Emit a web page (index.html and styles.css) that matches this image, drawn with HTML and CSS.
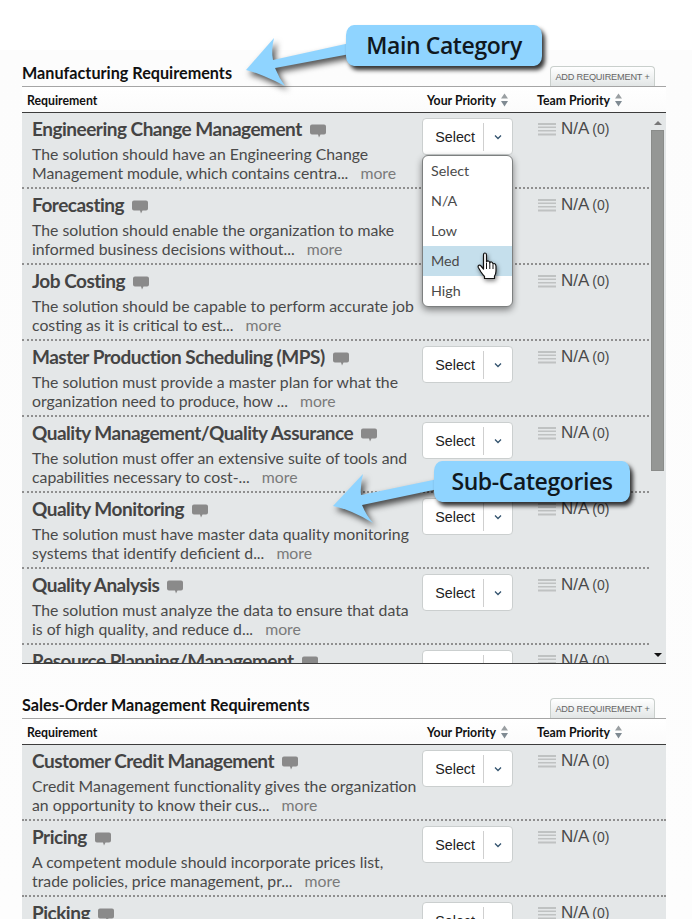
FILE: index.html
```html
<!DOCTYPE html>
<html lang="en">
<head>
<meta charset="utf-8">
<title>Requirements</title>
<link rel="stylesheet" href="styles.css">
</head>
<body>
<svg width="0" height="0" class="defs">
  <defs>
    <symbol id="bubble" viewBox="0 0 16 14"><path d="M2 0.5H14Q16 0.5 16 2.5V8.5Q16 10.500 14 10.500H10.500L9 13.500L8 10.500H2Q0 10.500 0 8.500V2.500Q0 0.500 2 0.500Z"/></symbol>
    <symbol id="sort" viewBox="0 0 7 14"><path d="M3.500 0.500L7 5.500H0Z" fill="#9a9fa2"/><path d="M0 8H7L3.500 13.500Z" fill="#7f8a92"/></symbol>
    <symbol id="bars" viewBox="0 0 18 13"><path d="M0 0H18V2H0ZM0 3.500H18V5H0ZM0 7H18V8.500H0ZM0 10.500H18V12.500H0Z"/></symbol>
    <symbol id="chev" viewBox="0 0 8 6"><path d="M1 1.500L4 4.500L7 1.500" fill="none" stroke="#33536e" stroke-width="1.300"/></symbol>
  </defs>
</svg>
<main class="page">
  <section class="block">
    <header class="titlebar">
      <h2>Manufacturing Requirements</h2>
      <button class="add">ADD REQUIREMENT +</button>
    </header>
    <div class="heads">
      <span class="h-req">Requirement</span>
      <span class="h-you">Your Priority <svg class="sort"><use href="#sort"/></svg></span>
      <span class="h-team">Team Priority <svg class="sort"><use href="#sort"/></svg></span>
    </div>
    <div class="listwrap scrolled">
      <div class="rows">
        <article class="row">
          <div class="desc"><h3>Engineering Change Management <svg class="bubble"><use href="#bubble"/></svg></h3><p>The solution should have an Engineering Change<br>Management module, which contains centra... <a>more</a></p></div>
          <div class="pick">
            <div class="select"><span class="sel-text">Select</span><span class="sel-arrow"><svg class="chev"><use href="#chev"/></svg></span></div>
            <ul class="menu">
              <li>Select</li><li>N/A</li><li>Low</li>
              <li class="hover">Med
                <svg class="hand" viewBox="0 0 20 28"><path d="M6.500 3Q6.500 1 8 1T9.500 3V10Q10 8.800 11.300 9T12.800 10.800Q13.300 9.800 14.500 10T16 12Q16.800 11.200 17.800 11.700T19 14V19Q19 22 17.500 24V26.500H7.500V24.500Q6 23 4 20L1.300 15.500Q0.700 14 1.800 13.300T4 14L6.500 17Z" fill="#fff" stroke="#111" stroke-width="1.200" stroke-linejoin="round"/><path d="M9.500 11V17M12.800 11V17M16 12.500V17" stroke="#111" fill="none"/></svg>
              </li>
              <li>High</li>
            </ul>
          </div>
          <div class="team"><svg class="bars"><use href="#bars"/></svg><span class="na">N/A</span> <span class="cnt">(0)</span></div>
        </article>
        <article class="row">
          <div class="desc"><h3>Forecasting <svg class="bubble"><use href="#bubble"/></svg></h3><p>The solution should enable the organization to make<br>informed business decisions without... <a>more</a></p></div>
          <div class="pick"></div>
          <div class="team"><svg class="bars"><use href="#bars"/></svg><span class="na">N/A</span> <span class="cnt">(0)</span></div>
        </article>
        <article class="row">
          <div class="desc"><h3>Job Costing <svg class="bubble"><use href="#bubble"/></svg></h3><p>The solution should be capable to perform accurate job<br>costing as it is critical to est... <a>more</a></p></div>
          <div class="pick"></div>
          <div class="team"><svg class="bars"><use href="#bars"/></svg><span class="na">N/A</span> <span class="cnt">(0)</span></div>
        </article>
        <article class="row">
          <div class="desc"><h3>Master Production Scheduling (MPS) <svg class="bubble"><use href="#bubble"/></svg></h3><p>The solution must provide a master plan for what the<br>organization need to produce, how ... <a>more</a></p></div>
          <div class="pick"><div class="select"><span class="sel-text">Select</span><span class="sel-arrow"><svg class="chev"><use href="#chev"/></svg></span></div></div>
          <div class="team"><svg class="bars"><use href="#bars"/></svg><span class="na">N/A</span> <span class="cnt">(0)</span></div>
        </article>
        <article class="row">
          <div class="desc"><h3>Quality Management/Quality Assurance <svg class="bubble"><use href="#bubble"/></svg></h3><p>The solution must offer an extensive suite of tools and<br>capabilities necessary to cost-... <a>more</a></p></div>
          <div class="pick"><div class="select"><span class="sel-text">Select</span><span class="sel-arrow"><svg class="chev"><use href="#chev"/></svg></span></div></div>
          <div class="team"><svg class="bars"><use href="#bars"/></svg><span class="na">N/A</span> <span class="cnt">(0)</span></div>
        </article>
        <article class="row">
          <div class="desc"><h3>Quality Monitoring <svg class="bubble"><use href="#bubble"/></svg></h3><p>The solution must have master data quality monitoring<br>systems that identify deficient d... <a>more</a></p></div>
          <div class="pick"><div class="select"><span class="sel-text">Select</span><span class="sel-arrow"><svg class="chev"><use href="#chev"/></svg></span></div></div>
          <div class="team"><svg class="bars"><use href="#bars"/></svg><span class="na">N/A</span> <span class="cnt">(0)</span></div>
        </article>
        <article class="row">
          <div class="desc"><h3>Quality Analysis <svg class="bubble"><use href="#bubble"/></svg></h3><p>The solution must analyze the data to ensure that data<br>is of high quality, and reduce d... <a>more</a></p></div>
          <div class="pick"><div class="select"><span class="sel-text">Select</span><span class="sel-arrow"><svg class="chev"><use href="#chev"/></svg></span></div></div>
          <div class="team"><svg class="bars"><use href="#bars"/></svg><span class="na">N/A</span> <span class="cnt">(0)</span></div>
        </article>
        <article class="row">
          <div class="desc"><h3>Resource Planning/Management <svg class="bubble"><use href="#bubble"/></svg></h3></div>
          <div class="pick"><div class="select"><span class="sel-text">Select</span><span class="sel-arrow"><svg class="chev"><use href="#chev"/></svg></span></div></div>
          <div class="team"><svg class="bars"><use href="#bars"/></svg><span class="na">N/A</span> <span class="cnt">(0)</span></div>
        </article>
      </div>
      <aside class="scrollbar">
        <i class="arrow-up"></i>
        <b class="thumb"></b>
        <i class="arrow-down"></i>
      </aside>
    </div>
  </section>

  <section class="block second">
    <header class="titlebar">
      <h2>Sales-Order Management Requirements</h2>
      <button class="add">ADD REQUIREMENT +</button>
    </header>
    <div class="heads">
      <span class="h-req">Requirement</span>
      <span class="h-you">Your Priority <svg class="sort"><use href="#sort"/></svg></span>
      <span class="h-team">Team Priority <svg class="sort"><use href="#sort"/></svg></span>
    </div>
    <div class="listwrap">
      <div class="rows">
        <article class="row">
          <div class="desc"><h3>Customer Credit Management <svg class="bubble"><use href="#bubble"/></svg></h3><p>Credit Management functionality gives the organization<br>an opportunity to know their cus... <a>more</a></p></div>
          <div class="pick"><div class="select"><span class="sel-text">Select</span><span class="sel-arrow"><svg class="chev"><use href="#chev"/></svg></span></div></div>
          <div class="team"><svg class="bars"><use href="#bars"/></svg><span class="na">N/A</span> <span class="cnt">(0)</span></div>
        </article>
        <article class="row">
          <div class="desc"><h3>Pricing <svg class="bubble"><use href="#bubble"/></svg></h3><p>A competent module should incorporate prices list,<br>trade policies, price management, pr... <a>more</a></p></div>
          <div class="pick"><div class="select"><span class="sel-text">Select</span><span class="sel-arrow"><svg class="chev"><use href="#chev"/></svg></span></div></div>
          <div class="team"><svg class="bars"><use href="#bars"/></svg><span class="na">N/A</span> <span class="cnt">(0)</span></div>
        </article>
        <article class="row">
          <div class="desc"><h3>Picking <svg class="bubble"><use href="#bubble"/></svg></h3></div>
          <div class="pick"><div class="select"><span class="sel-text">Select</span><span class="sel-arrow"><svg class="chev"><use href="#chev"/></svg></span></div></div>
          <div class="team"><svg class="bars"><use href="#bars"/></svg><span class="na">N/A</span> <span class="cnt">(0)</span></div>
        </article>
      </div>
    </div>
  </section>

  <svg class="arrows" viewBox="0 0 692 919" width="692" height="919">
    <path d="M246 70L274 38Q271 50 273 60L350 43V54L275 68Q279 78 285 86Q262 74 246 70Z"/>
    <path d="M333 506L363 474Q360 485 361 495L438 479V489L362 505Q366 515 373 523Q352 510 333 506Z"/>
  </svg>
  <div class="callout main-cat">Main Category</div>
  <div class="callout sub-cat">Sub-Categories</div>
</main>
</body>
</html>
```
FILE: styles.css
```css
* { box-sizing: border-box; }
html, body { margin: 0; height: 919px; overflow: hidden; }
body { background: linear-gradient(#fff 50px, #fcfcfc 50px, #fdfdfd 100%); font-family: "Lato", sans-serif; color: #444; }
.defs { position: absolute; }
.page { position: relative; width: 692px; height: 919px; overflow: hidden; padding: 66px 26px 0 22px; }
.block { width: 644px; }
.second { margin-top: 34px; }
.titlebar { display: flex; justify-content: space-between; align-items: flex-end; height: 21px; border-bottom: 1px solid #a5a5a5; padding-right: 11px; }
.titlebar h2 { margin: 0 0 4px; font-size: 16.200px; line-height: 18px; font-weight: 700; color: #111; }
.add { width: 105px; height: 20px; padding: 0; border: 1px solid #c9cfcc; border-bottom: 0; border-radius: 4px 4px 0 0; background: linear-gradient(#fff, #e2e6e6); font: 9.200px "Liberation Sans", sans-serif; letter-spacing: -0.2px; color: #666; white-space: nowrap; }
.heads { display: flex; align-items: center; height: 26px; padding-top: 1px; border-bottom: 1px solid #3c3c3c; font-size: 12.300px; font-weight: 700; color: #111; background: linear-gradient(#fff, #fbfbfb); }
.h-req { width: 405px; padding-left: 5px; }
.h-you { width: 110px; display: flex; align-items: center; gap: 5px; }
.h-team { display: flex; align-items: center; gap: 5px; }
.sort { width: 7px; height: 14px; }
.listwrap { display: flex; background: #e4e7e8; }
.scrolled { height: 551px; border-bottom: 1px solid #3c3c3c; overflow: hidden; }
.rows { flex: 1; min-width: 0; }
.row { display: flex; height: 76px; padding-left: 10px; border-bottom: 2px dotted #8f8f8f; }
.desc { width: 390px; flex: none; white-space: nowrap; }
.desc h3 { margin: 4px 0 0; font-size: 19px; letter-spacing: -0.5px; line-height: 24px; font-weight: 700; color: #444; display: flex; align-items: center; gap: 8px; }
.bubble { width: 16px; height: 14px; fill: #8a8a8a; margin-top: 4px; }
.desc p { margin: 3px 0 0; font-size: 15.800px; line-height: 19px; color: #4a4a4a; }
.desc a { color: #7a7a7a; margin-left: 8px; }
.pick { position: relative; width: 91px; flex: none; padding-top: 5px; }
.select { display: flex; align-items: center; height: 37px; background: #fff; border: 1px solid #cbcfcf; border-radius: 4px; font: 14.300px "Liberation Sans", sans-serif; color: #222; }
.sel-text { width: 61px; text-align: right; height: 28px; line-height: 28px; border-right: 1px solid #cfcfcf; flex: none; padding-right: 8px; }
.sel-arrow { flex: 1; display: flex; justify-content: center; }
.chev { width: 8px; height: 6px; }
.menu { position: absolute; z-index: 5; left: 0; top: 42px; width: 91px; margin: 0; padding: 0; list-style: none; background: #fff; border: 1px solid #7d8080; border-radius: 6px; box-shadow: 0 3px 7px rgba(0,0,0,.45); }
.menu li { position: relative; height: 30px; line-height: 30px; padding-left: 8px; font-size: 14.300px; color: #4a4a4a; }
.menu .hover { background: #c5dfec; }
.hand { position: absolute; left: 54px; top: 6px; width: 20px; height: 28px; filter: drop-shadow(1px 2px 2px rgba(0,0,0,.5)); }
.team { display: flex; align-items: baseline; margin-left: 25px; padding-top: 6px; white-space: nowrap; font-family: "Liberation Sans", sans-serif; color: #4a4a4a; height: 31px; }
.bars { width: 18px; height: 13px; fill: #bfc2c2; align-self: flex-start; margin-top: 4px; margin-right: 5px; }
.na { font-size: 17px; }
.cnt { font-size: 14px; margin-left: 3px; }
.scrollbar { width: 17px; flex: none; display: flex; flex-direction: column; align-items: center; height: 550px; }
.arrow-up { margin-top: 8px; border: 4px solid transparent; border-top: 0; border-bottom: 4px solid #777; }
.thumb { width: 13px; height: 341px; margin-top: 5px; background: #959795; border: 1px solid #8a8c8a; }
.arrow-down { margin-top: auto; margin-bottom: 6px; border: 4px solid transparent; border-bottom: 0; border-top: 4px solid #111; }
.arrows { position: absolute; left: 0; top: 0; z-index: 6; fill: #8fd4ff; filter: drop-shadow(3px 4px 3px rgba(0,0,0,.7)); pointer-events: none; }
.callout { position: absolute; z-index: 7; width: 196px; height: 41px; background: #8fd4ff; border-radius: 8px / 10px; box-shadow: 3px 4px 4px rgba(0,0,0,.8); font: 600 23px/40px "Open Sans", sans-serif; letter-spacing: -0.4px; color: #101820; text-align: center; white-space: nowrap; }
.main-cat { left: 346px; top: 25px; }
.sub-cat { left: 434px; top: 461px; }
```
